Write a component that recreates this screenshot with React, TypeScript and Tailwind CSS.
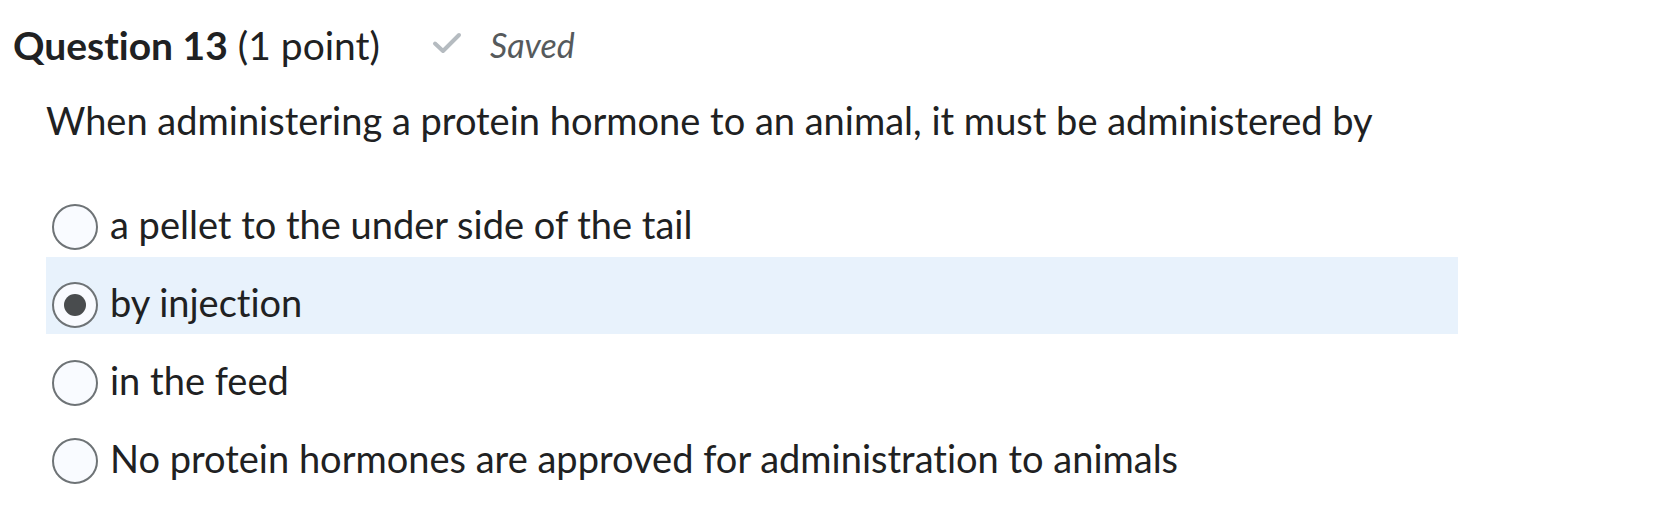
import React, { useState } from 'react';

const options = [
  'a pellet to the under side of the tail',
  'by injection',
  'in the feed',
  'No protein hormones are approved for administration to animals',
];

function Radio({ checked }: { checked: boolean }) {
  return (
    <span className="flex h-[46px] w-[46px] shrink-0 items-center justify-center rounded-full border-2 border-[#6e7376] bg-[#f9fbff]">
      {checked && <span className="h-[22px] w-[22px] rounded-full bg-[#494c4e]" />}
    </span>
  );
}

export default function App() {
  const [selected, setSelected] = useState(1);

  return (
    <div className="min-h-screen w-full bg-white text-[#202122] font-['Lato',sans-serif] [font-variant-ligatures:none]">
      {/* Question header */}
      <div className="flex h-[90px] items-center pl-[13px]">
        <h2 className="text-[39px] leading-none">
          <span className="font-bold">Question 13</span>{' '}
          <span className="font-normal">(1 point)</span>
        </h2>
        <div className="ml-[52px] flex items-center gap-[28px] text-[#565a5c]">
          <svg width="30" height="22" viewBox="0 0 30 22" fill="none" className="mt-[-4px]">
            <path d="M3 11.5 L11 19 L27 3" stroke="#b5bbc0" strokeWidth="4" strokeLinecap="round" strokeLinejoin="round" />
          </svg>
          <span className="text-[34px] italic leading-none">Saved</span>
        </div>
      </div>

      {/* Question text */}
      <p className="mt-[5px] h-[50px] pl-[46px] text-[38px] leading-[50px]">
        When administering a protein hormone to an animal, it must be administered by
      </p>

      {/* Options */}
      <ul className="mt-[34px] flex flex-col gap-px">
        {options.map((opt, i) => (
          <li key={opt}>
            <label
              onClick={() => setSelected(i)}
              className={`ml-[46px] flex h-[77px] w-[1412px] cursor-pointer items-center gap-[12px] pl-[6px] pt-[19px] ${
                selected === i ? 'bg-[#e8f2fc]' : 'bg-transparent'
              }`}
            >
              <Radio checked={selected === i} />
              <span className="pb-[6px] text-[38px] leading-none">{opt}</span>
            </label>
          </li>
        ))}
      </ul>
    </div>
  );
}
